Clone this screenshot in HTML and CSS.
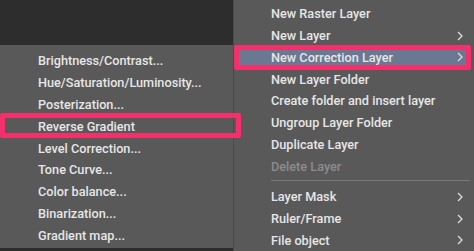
FILE: index.html
```html
<!DOCTYPE html>
<html>
   <head>
      <meta charset="UTF-8">
      <title>Layer menu</title>
      <link rel="stylesheet" href="styles.css">
   </head>
   <body>
      <div class="stage">
         <ul class="menu sub-menu">
            <li>Brightness/Contrast...</li>
            <li>Hue/Saturation/Luminosity...</li>
            <li>Posterization...</li>
            <li>Reverse Gradient</li>
            <li>Level Correction...</li>
            <li>Tone Curve...</li>
            <li>Color balance...</li>
            <li>Binarization...</li>
            <li>Gradient map...</li>
         </ul>

         <ul class="menu main-menu">
            <li>New Raster Layer</li>
            <li class="has-sub">New Layer <svg class="chev" viewBox="0 0 6 10"><path d="M1 1 L5 5 L1 9"/></svg></li>
            <li class="has-sub active">New Correction Layer <svg class="chev" viewBox="0 0 6 10"><path d="M1 1 L5 5 L1 9"/></svg></li>
            <li>New Layer Folder</li>
            <li>Create folder and insert layer</li>
            <li>Ungroup Layer Folder</li>
            <li>Duplicate Layer</li>
            <li class="disabled">Delete Layer</li>
            <li class="sep"></li>
            <li class="has-sub">Layer Mask <svg class="chev" viewBox="0 0 6 10"><path d="M1 1 L5 5 L1 9"/></svg></li>
            <li class="has-sub">Ruler/Frame <svg class="chev" viewBox="0 0 6 10"><path d="M1 1 L5 5 L1 9"/></svg></li>
            <li class="has-sub">File object <svg class="chev" viewBox="0 0 6 10"><path d="M1 1 L5 5 L1 9"/></svg></li>
         </ul>

         <!-- annotation boxes -->
         <div class="mark mark-left"></div>
         <div class="mark mark-right"></div>
      </div>
   </body>
</html>
```

FILE: styles.css
```css
*
{
   box-sizing: border-box;
}

html, body
{
   margin: 0;
   padding: 0;
   background: #2d2d2d;
}

body
{
   width: 474px;
   height: 251px;
   overflow: hidden;
   font-family: Roboto, "Noto Sans", sans-serif;
   font-size: 12.7px;
   font-weight: 500;
   color: #e6e6e6;
}

.stage
{
   position: relative;
   display: flex;
   align-items: flex-start;
   height: 251px;
}

.menu
{
   list-style: none;
   margin: 0;
   background: #595959;
}

.menu li
{
   display: flex;
   align-items: center;
   height: 21.8px;
   white-space: nowrap;
}

.sub-menu
{
   width: 233px;
   margin-top: 45px;
   padding: 5px 0 2px 38px;
}

.main-menu
{
   flex: 1;
   height: 251px;
   padding: 3px 4px 0 2px;
   border-left: 1px solid #4a4a4a;
}

.main-menu li
{
   padding-left: 35px;
   padding-right: 7px;
   height: 21.75px;
}

.main-menu li.has-sub
{
   justify-content: space-between;
}

.main-menu li.active
{
   background: #6b7892;
}

.main-menu li.disabled
{
   color: #8c8c8c;
}

.main-menu li.sep
{
   height: 1px;
   margin: 3px 0 5px 35px;
   padding: 0;
   background: #787878;
}

.chev
{
   width: 6px;
   height: 10px;
   fill: none;
   stroke: #dcdcdc;
   stroke-width: 1.3;
}

.mark
{
   position: absolute;
   border: 5px solid #f2316c;
   border-radius: 2px;
}

.mark-left
{
   left: 0;
   top: 113px;
   width: 241px;
   height: 25px;
}

.mark-right
{
   left: 234px;
   top: 45px;
   width: 237px;
   height: 25px;
}
```
